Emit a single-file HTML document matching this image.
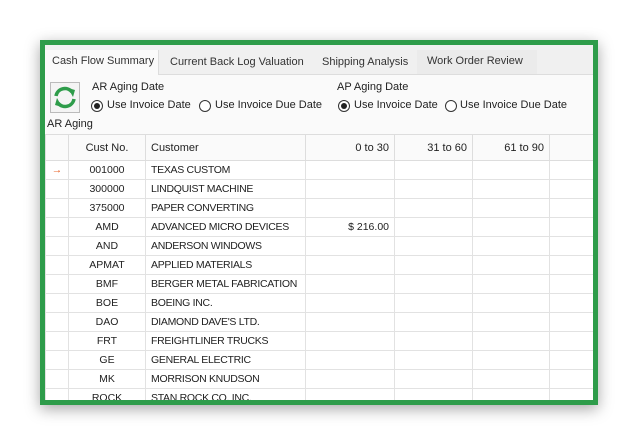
<!DOCTYPE html>
<html><head><style>
body{margin:0;width:635px;height:445px;background:#fff;font-family:"Liberation Sans",sans-serif;font-size:11px;color:#222;position:relative;overflow:hidden}
.frame{position:absolute;left:40px;top:40px;width:548px;height:355px;border:5px solid #2e9c4a;background:#fff;box-shadow:0 4px 14px rgba(0,0,0,.35);overflow:hidden}
.tabs{position:absolute;left:0;top:0;width:548px;height:29px;background:#f0f0f0;border-bottom:1px solid #ddd}
.tab{position:absolute;top:8px;height:21px;line-height:18px;color:#333;white-space:nowrap}
.tab.act{background:#fafafa;left:0;top:5px;height:25px;width:114px;border-right:1px solid #ddd;line-height:22px;padding-left:7px;box-sizing:border-box}
.panel{position:absolute;left:0;top:30px;width:548px;height:60px;background:#fafafa}
.t{position:absolute;white-space:nowrap}
.rad{position:absolute;width:12px;height:12px;border:1px solid #333;border-radius:50%;box-sizing:border-box;background:#fff}
.rad.on::after{content:"";position:absolute;left:2px;top:2px;width:6px;height:6px;border-radius:50%;background:#222}
table{position:absolute;left:0;top:89px;border-collapse:collapse;table-layout:fixed;width:554px}
td{height:18px;border:1px solid #e2e2e2;padding:0 5px;white-space:nowrap;overflow:hidden;font-size:10.5px}
td.n{letter-spacing:-0.3px}
tr.h td{height:25px;background:#fafafa;border-color:#ddd;font-size:11px;letter-spacing:0}
.c{text-align:center}.r{text-align:right}
</style></head><body>
<div class="frame">
<div class="tabs">
<div class="tab act">Cash Flow Summary</div>
<div class="tab" style="left:125px">Current Back Log Valuation</div>
<div class="tab" style="left:277px">Shipping Analysis</div>
<div class="tab" style="left:372px;width:120px;background:#ebebeb;top:5px;height:24px;line-height:22px;padding-left:10px;box-sizing:border-box">Work Order Review</div>
</div>
<div class="panel">
<div style="position:absolute;left:5px;top:7px;width:28px;height:29px;border:1px solid #bbb;background:#f4f4f4">
<svg width="28" height="29" viewBox="0 0 28 29"><path d="M5 13 A9 9 0 0 1 21 9" stroke="#2e9c4a" stroke-width="3.5" fill="none"/><path d="M17 5 L24 7 L22 14 Z" fill="#2e9c4a"/><path d="M23 16 A9 9 0 0 1 7 20" stroke="#2e9c4a" stroke-width="3.5" fill="none"/><path d="M11 24 L4 22 L6 15 Z" fill="#2e9c4a"/></svg></div>
<div class="t" style="left:47px;top:6px">AR Aging Date</div>
<div class="rad on" style="left:46px;top:25px"></div><div class="t" style="left:62px;top:24px">Use Invoice Date</div>
<div class="rad" style="left:154px;top:25px"></div><div class="t" style="left:170px;top:24px">Use Invoice Due Date</div>
<div class="t" style="left:292px;top:6px">AP Aging Date</div>
<div class="rad on" style="left:293px;top:25px"></div><div class="t" style="left:309px;top:24px">Use Invoice Date</div>
<div class="rad" style="left:400px;top:25px"></div><div class="t" style="left:415px;top:24px">Use Invoice Due Date</div>
<div class="t" style="left:2px;top:43px">AR Aging</div>
</div>
<table>
<colgroup><col style="width:23px"><col style="width:77px"><col style="width:160px"><col style="width:89px"><col style="width:78px"><col style="width:77px"><col style="width:50px"></colgroup>
<tr class="h"><td></td><td class="c">Cust No.</td><td>Customer</td><td class="r">0 to 30</td><td class="r">31 to 60</td><td class="r">61 to 90</td><td></td></tr>
<tr><td style="color:#e8642a;text-align:center">→</td><td class="c">001000</td><td class="n">TEXAS CUSTOM</td><td></td><td></td><td></td><td></td></tr>
<tr><td></td><td class="c">300000</td><td class="n">LINDQUIST MACHINE</td><td></td><td></td><td></td><td></td></tr>
<tr><td></td><td class="c">375000</td><td class="n">PAPER CONVERTING</td><td></td><td></td><td></td><td></td></tr>
<tr><td></td><td class="c">AMD</td><td class="n">ADVANCED MICRO DEVICES</td><td class="r">$ 216.00</td><td></td><td></td><td></td></tr>
<tr><td></td><td class="c">AND</td><td class="n">ANDERSON WINDOWS</td><td></td><td></td><td></td><td></td></tr>
<tr><td></td><td class="c">APMAT</td><td class="n">APPLIED MATERIALS</td><td></td><td></td><td></td><td></td></tr>
<tr><td></td><td class="c">BMF</td><td class="n">BERGER METAL FABRICATION</td><td></td><td></td><td></td><td></td></tr>
<tr><td></td><td class="c">BOE</td><td class="n">BOEING INC.</td><td></td><td></td><td></td><td></td></tr>
<tr><td></td><td class="c">DAO</td><td class="n">DIAMOND DAVE'S LTD.</td><td></td><td></td><td></td><td></td></tr>
<tr><td></td><td class="c">FRT</td><td class="n">FREIGHTLINER TRUCKS</td><td></td><td></td><td></td><td></td></tr>
<tr><td></td><td class="c">GE</td><td class="n">GENERAL ELECTRIC</td><td></td><td></td><td></td><td></td></tr>
<tr><td></td><td class="c">MK</td><td class="n">MORRISON KNUDSON</td><td></td><td></td><td></td><td></td></tr>
<tr><td></td><td class="c">ROCK</td><td class="n">STAN ROCK CO. INC.</td><td></td><td></td><td></td><td></td></tr>
</table>
</div>
</body></html>
